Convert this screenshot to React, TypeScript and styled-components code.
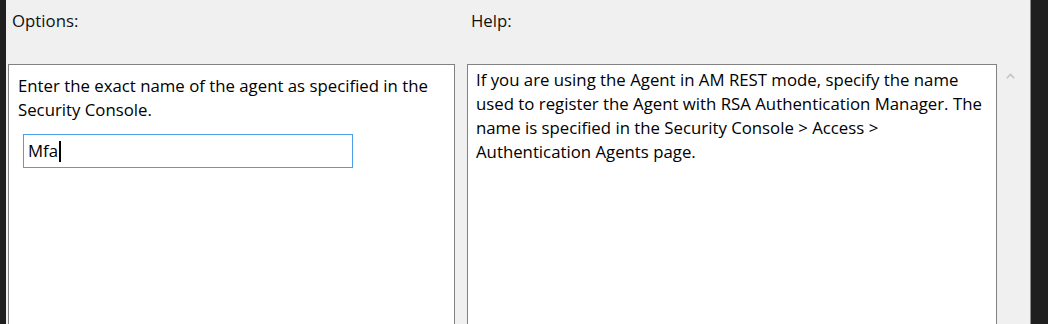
import React from "react";
import styled, { createGlobalStyle } from "styled-components";

const Global = createGlobalStyle`
  html, body { margin: 0; padding: 0; background: #f0f0f0; }
  body { font-family: "Open Sans", "Noto Sans", sans-serif; color: #000; }
`;

const Frame = styled.div`
  display: flex;
  width: 1048px;
  height: 324px;
  overflow: hidden;
  background: #f0f0f0;
`;

const DarkEdge = styled.div<{ $w: number }>`
  flex: 0 0 ${(p) => p.$w}px;
  background: #1f1f1f;
`;

const Dialog = styled.div`
  flex: 1;
  display: flex;
  padding-left: 2px;
  border-right: 1px solid #8a8a8a;
`;

const Column = styled.div<{ $w: number }>`
  flex: 0 0 ${(p) => p.$w}px;
  display: flex;
  flex-direction: column;
`;

const Spacer = styled.div<{ $w: number }>`
  flex: 0 0 ${(p) => p.$w}px;
`;

const Label = styled.div`
  height: 64px;
  box-sizing: border-box;
  padding: 9px 0 0 4px;
  font-size: 16.8px;
  line-height: 24px;
  color: #111;
`;

const Panel = styled.div<{ $pad: string }>`
  flex: 1;
  background: #fff;
  border: 1px solid #828282;
  border-bottom: none;
  padding: ${(p) => p.$pad};
  font-size: 16.8px;
  line-height: 24px;
`;

const Line = styled.span`
  display: block;
  white-space: nowrap;
`;

const TextBox = styled.div`
  margin: 12px 0 0 5px;
  width: 330px;
  height: 34px;
  box-sizing: border-box;
  border: 1px solid #4a9fe8;
  padding: 0 4px;
  display: flex;
  align-items: center;
  font-size: 16.8px;
`;

const Cursor = styled.span`
  display: inline-block;
  width: 1.5px;
  height: 21px;
  background: #000;
  margin-left: 1px;
`;

const ScrollGutter = styled.div`
  flex: 1;
  display: flex;
  justify-content: flex-start;
  padding: 73px 0 0 9px;
`;

export default function App() {
  return (
    <>
      <Global />
      <Frame>
        <DarkEdge $w={6} />
        <Dialog>
          <Column $w={447}>
            <Label>Options:</Label>
            <Panel $pad="9px 9px">
              <Line>Enter the exact name of the agent as specified in the</Line>
              <Line>Security Console.</Line>
              <TextBox>
                Mfa
                <Cursor />
              </TextBox>
            </Panel>
          </Column>
          <Spacer $w={12} />
          <Column $w={530}>
            <Label>Help:</Label>
            <Panel $pad="3px 8px">
              <Line>If you are using the Agent in AM REST mode, specify the name</Line>
              <Line>used to register the Agent with RSA Authentication Manager. The</Line>
              <Line>name is specified in the Security Console &gt; Access &gt;</Line>
              <Line>Authentication Agents page.</Line>
            </Panel>
          </Column>
          <ScrollGutter>
            <svg width="9" height="6" viewBox="0 0 9 6">
              <path d="M0.8 5.2 L4.5 1.5 L8.2 5.2" fill="none" stroke="#c2c2c2" strokeWidth="1.6" />
            </svg>
          </ScrollGutter>
        </Dialog>
        <DarkEdge $w={17} />
      </Frame>
    </>
  );
}
